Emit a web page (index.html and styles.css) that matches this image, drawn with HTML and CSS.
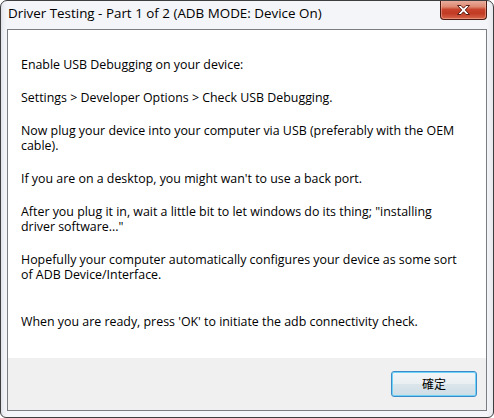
FILE: index.html
```html
<!DOCTYPE html>
<html>
<head>
<meta charset="utf-8">
<link rel="stylesheet" href="styles.css">
</head>
<body>
<div class="window">
  <div class="titlebar">
    <span class="title">Driver Testing - Part 1 of 2 (ADB MODE: Device On)</span>
    <div class="close">
      <svg width="15" height="12" viewBox="0 0 15 12">
        <path d="M1.5 1.5 H5 L7.5 4.2 L10 1.5 H13.5 L9.3 6 L13.5 10.5 H10 L7.5 7.8 L5 10.5 H1.5 L5.7 6 Z" fill="#ffffff" stroke="#5a1f14" stroke-width="1" stroke-linejoin="round"/>
      </svg>
    </div>
  </div>
  <div class="client">
    <div class="content">
      <p>Enable USB Debugging on your device:</p>
      <p>Settings &gt; Developer Options &gt; Check USB Debugging.</p>
      <p>Now plug your device into your computer via USB (preferably with the OEM<br>cable).</p>
      <p>If you are on a desktop, you might wan't to use a back port.</p>
      <p>After you plug it in, wait a little bit to let windows do its thing; "installing<br>driver software..."</p>
      <p class="gap">Hopefully your computer automatically configures your device as some sort<br>of ADB Device/Interface.</p>
      <p>When you are ready, press 'OK' to initiate the adb connectivity check.</p>
    </div>
    <div class="footer">
      <button class="ok">確定</button>
    </div>
  </div>
</div>
</body>
</html>
```

FILE: styles.css
```css
html, body {
  margin: 0;
  padding: 0;
  background: #ffffff;
}

.window {
  box-sizing: border-box;
  width: 494px;
  height: 418px;
  border: 1px solid #3e3e3e;
  border-radius: 7px 7px 6px 6px;
  padding: 0 6px 6px 6px;
  display: flex;
  flex-direction: column;
  background: linear-gradient(90deg, #dfe3ea 0px, #eef0f4 3px, #f4f5f8 6px, #f4f5f8 calc(100% - 6px), #e6e9ee 100%);
  font-family: "Open Sans", "Noto Sans", sans-serif;
  font-size: 12.4px;
  color: #000;
  overflow: hidden;
}

.titlebar {
  height: 28px;
  display: flex;
  justify-content: space-between;
  align-items: flex-start;
}

.title {
  padding-left: 1px;
  padding-top: 4px;
  font-size: 13.4px;
  line-height: 16px;
  color: #000;
  white-space: nowrap;
}

.close {
  box-sizing: border-box;
  margin-top: -1px;
  width: 47px;
  height: 20px;
  border: 1px solid #4a1a12;
  border-top: none;
  border-radius: 0 0 4px 4px;
  background: linear-gradient(180deg, #e9b1a2 0%, #dd8a73 35%, #c8442d 50%, #c23a24 70%, #d8664a 100%);
  box-shadow: inset 0 0 0 1px rgba(255, 200, 185, 0.45);
  display: flex;
  align-items: center;
  justify-content: center;
}

.client {
  flex: 1;
  display: flex;
  flex-direction: column;
  border: 1px solid #7a7d82;
  background: #ffffff;
}

.content {
  flex: 1;
  padding: 27px 13px 0 13px;
  line-height: 15px;
  white-space: nowrap;
}

.content p {
  margin: 0 0 18px 0;
}

.content p.gap {
  margin-bottom: 32px;
}

.footer {
  height: 52px;
  background: #f0f0f0;
  display: flex;
  justify-content: flex-end;
  align-items: flex-start;
  padding: 13px 9px 0 0;
  box-sizing: border-box;
}

.ok {
  box-sizing: border-box;
  width: 86px;
  height: 26px;
  border: 1px solid #3c8bc9;
  border-radius: 3px;
  box-shadow: inset 0 0 0 1px #6fd3f7;
  background: linear-gradient(180deg, #f2f5f7 0%, #eaeff2 48%, #dae5eb 52%, #cfdde5 100%);
  font-family: "Noto Sans CJK TC", "Noto Sans CJK SC", sans-serif;
  font-size: 12px;
  color: #000;
  padding: 0;
  line-height: 22px;
}
```
